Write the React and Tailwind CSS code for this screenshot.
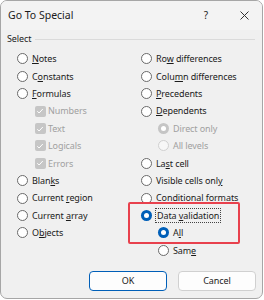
const leftItems = [
  { pre: "", key: "N", post: "otes" },
  { pre: "C", key: "o", post: "nstants" },
  { pre: "", key: "F", post: "ormulas" },
  { check: true, label: "Numbers" },
  { check: true, label: "Text" },
  { check: true, label: "Logicals" },
  { check: true, label: "Errors" },
  { pre: "Blan", key: "k", post: "s" },
  { pre: "Current ", key: "r", post: "egion" },
  { pre: "Current ", key: "a", post: "rray" },
  { pre: "O", key: "b", post: "jects" },
];

const rightItems = [
  { pre: "Ro", key: "w", post: " differences" },
  { pre: "Colu", key: "m", post: "n differences" },
  { pre: "", key: "P", post: "recedents" },
  { pre: "", key: "D", post: "ependents" },
  { sub: true, label: "Direct only", checked: true },
  { sub: true, label: "All levels" },
  { pre: "La", key: "s", post: "t cell" },
  { pre: "Visible cells onl", key: "y", post: "" },
  { pre: "Condi", key: "t", post: "ional formats" },
  { pre: "Data ", key: "v", post: "alidation", checked: true, focus: true },
  { pre: "A", key: "l", post: "l", checked: true, indent: true },
  { pre: "Sam", key: "e", post: "", indent: true },
];

const Radio = ({ checked, disabled }) => {
  if (checked && !disabled) {
    return (
      <span className="flex h-[11px] w-[11px] shrink-0 items-center justify-center rounded-full bg-[#005fb8]">
        <span className="h-[5px] w-[5px] rounded-full bg-white" />
      </span>
    );
  }
  if (checked && disabled) {
    return (
      <span className="flex h-[11px] w-[11px] shrink-0 items-center justify-center rounded-full bg-[#c5c5c5]">
        <span className="h-[5px] w-[5px] rounded-full bg-white" />
      </span>
    );
  }
  return (
    <span
      className={
        disabled
          ? "h-[11px] w-[11px] shrink-0 rounded-full border border-[#d0d0d0] bg-[#f7f7f7]"
          : "h-[11px] w-[11px] shrink-0 rounded-full border border-[#6a6a6a] bg-white"
      }
    />
  );
};

const Check = () => (
  <span className="flex h-[11px] w-[11px] shrink-0 items-center justify-center rounded-[2px] bg-[#c6c6c6]">
    <svg width="8" height="8" viewBox="0 0 8 8" fill="none">
      <path d="M1.3 4.2 L3.1 6 L6.8 2" stroke="white" strokeWidth="1" />
    </svg>
  </span>
);

const Label = ({ item }) => (
  <span
    className={
      item.focus
        ? "border border-dotted border-[#444] px-[1px] leading-[12px]"
        : "leading-[12px]"
    }
  >
    {item.pre}
    <span className="underline underline-offset-[1px]">{item.key}</span>
    {item.post}
  </span>
);

const LeftRow = ({ item }) => {
  if (item.check) {
    return (
      <div className="flex h-[17.4px] items-center pl-[18px] text-[#a0a0a0]">
        <Check />
        <span className="ml-[2.5px]">{item.label}</span>
      </div>
    );
  }
  return (
    <div className="flex h-[17.4px] items-center">
      <Radio />
      <span className="ml-[4.5px]">
        <Label item={item} />
      </span>
    </div>
  );
};

const RightRow = ({ item }) => {
  if (item.sub) {
    return (
      <div className="flex h-[17.4px] items-center pl-[17px] text-[#a0a0a0]">
        <Radio checked={item.checked} disabled />
        <span className="ml-[4.5px]">{item.label}</span>
      </div>
    );
  }
  return (
    <div
      className={
        item.indent
          ? "flex h-[17.4px] items-center pl-[17px]"
          : "flex h-[17.4px] items-center"
      }
    >
      <Radio checked={item.checked} />
      <span className={item.focus ? "ml-[3.5px]" : "ml-[4.5px]"}>
        <Label item={item} />
      </span>
    </div>
  );
};

export default function App() {
  return (
    <div className="h-[300px] w-[264px] bg-white font-['Noto_Sans',sans-serif] text-[9px] tracking-[-0.1px] text-[#1b1b1b]">
      <div className="relative flex h-[299px] w-[263px] flex-col overflow-hidden rounded-[7px] border border-[#a6a6a6] bg-[#f0f0f0]">
        <div className="flex h-[29px] shrink-0 items-center bg-[#f3f3f3] pl-[7px] text-[10.5px] tracking-normal">
          <span className="flex-1">Go To Special</span>
          <span className="w-[10px] text-center text-[10px]">?</span>
          <span className="ml-[28px] mr-[13px] flex h-[10px] w-[10px] items-center justify-center">
            <svg width="9" height="9" viewBox="0 0 9 9">
              <path d="M0.5 0.5 L8.5 8.5 M8.5 0.5 L0.5 8.5" stroke="#333" strokeWidth="1" />
            </svg>
          </span>
        </div>

        <div className="mt-[3px] flex h-[12px] items-center pl-[6px] pr-[7px]">
          <span>Select</span>
          <span className="ml-[4px] h-px flex-1 bg-[#dadada]" />
        </div>

        <div className="mt-[5.3px] flex pl-[15.5px]">
          <div className="w-[124px]">
            {leftItems.map((item, i) => (
              <LeftRow key={i} item={item} />
            ))}
          </div>
          <div>
            {rightItems.map((item, i) => (
              <RightRow key={i} item={item} />
            ))}
          </div>
        </div>

        <div className="mt-[12px] flex justify-end gap-[11px] pr-[6px]">
          <button className="h-[20px] w-[78px] rounded-[4px] border border-[#005fb8] bg-[#fdfdfd] text-[9px] text-[#1b1b1b]">
            OK
          </button>
          <button className="h-[20px] w-[78px] rounded-[4px] border border-[#d0d0d0] bg-[#fdfdfd] text-[9px] text-[#1b1b1b]">
            Cancel
          </button>
        </div>

        <div className="pointer-events-none absolute left-[127px] top-[201px] h-[42px] w-[112px] rounded-[2px] border-2 border-[#e8414d]" />
      </div>
    </div>
  );
}
